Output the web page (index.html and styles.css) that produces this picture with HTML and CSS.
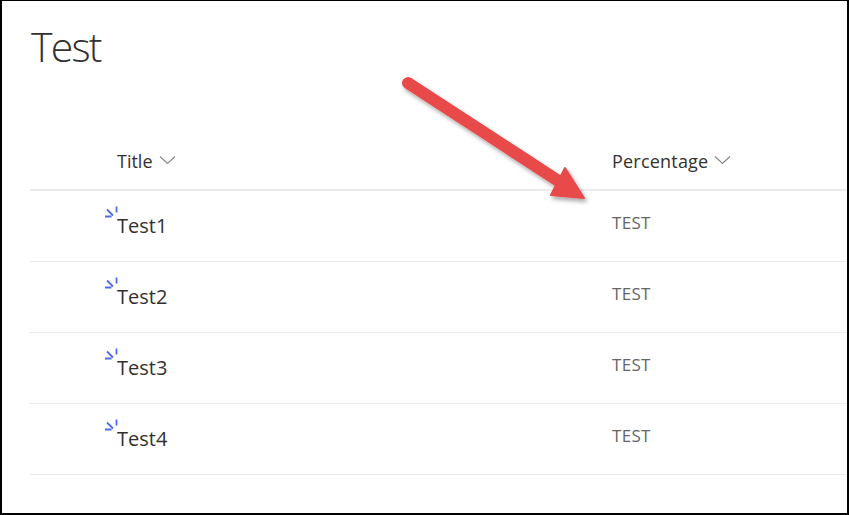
FILE: index.html
```html
<!DOCTYPE html>
<html lang="en">
<head>
    <meta charset="UTF-8">
    <title>Test</title>
    <link rel="stylesheet" href="styles.css">
</head>
<body>

    <div class="frame">
        <h1 class="page-title">Test</h1>

        <div class="list">
            <div class="row head">
                <div class="cell name">Title <span class="chev"><svg width="17" height="10" viewBox="0 0 17 10"><path d="M1 1.5 L8.5 8.5 L16 1.5" fill="none" stroke="#8a8886" stroke-width="1.2"/></svg></span></div>
                <div class="cell pct">Percentage <span class="chev"><svg width="17" height="10" viewBox="0 0 17 10"><path d="M1 1.5 L8.5 8.5 L16 1.5" fill="none" stroke="#8a8886" stroke-width="1.2"/></svg></span></div>
            </div>
            <div class="row">
                <div class="cell name"><span class="new"><svg width="14" height="12" viewBox="0 0 14 12"><path d="M1 10.5 H7.5 M3 3.5 L9 9.5 M12.5 0.5 V6.5" fill="none" stroke="#4f6bed" stroke-width="1.8"/></svg></span>Test1</div>
                <div class="cell pct">TEST</div>
            </div>
            <div class="row">
                <div class="cell name"><span class="new"><svg width="14" height="12" viewBox="0 0 14 12"><path d="M1 10.5 H7.5 M3 3.5 L9 9.5 M12.5 0.5 V6.5" fill="none" stroke="#4f6bed" stroke-width="1.8"/></svg></span>Test2</div>
                <div class="cell pct">TEST</div>
            </div>
            <div class="row">
                <div class="cell name"><span class="new"><svg width="14" height="12" viewBox="0 0 14 12"><path d="M1 10.5 H7.5 M3 3.5 L9 9.5 M12.5 0.5 V6.5" fill="none" stroke="#4f6bed" stroke-width="1.8"/></svg></span>Test3</div>
                <div class="cell pct">TEST</div>
            </div>
            <div class="row">
                <div class="cell name"><span class="new"><svg width="14" height="12" viewBox="0 0 14 12"><path d="M1 10.5 H7.5 M3 3.5 L9 9.5 M12.5 0.5 V6.5" fill="none" stroke="#4f6bed" stroke-width="1.8"/></svg></span>Test4</div>
                <div class="cell pct">TEST</div>
            </div>
        </div>

        <!-- annotation arrow drawn over the list -->
        <svg class="arrow" width="849" height="515" viewBox="0 0 849 515">
            <defs>
                <filter id="sh" x="-20%" y="-20%" width="140%" height="140%">
                    <feDropShadow dx="2" dy="3" stdDeviation="2" flood-color="#000" flood-opacity="0.35"/>
                </filter>
            </defs>
            <g filter="url(#sh)" fill="#e8484a" stroke="#e8484a">
                <line x1="408" y1="83" x2="560" y2="182" stroke-width="12" stroke-linecap="round"/>
                <polygon points="565,168 551,195 584,198" stroke-width="2" stroke-linejoin="round"/>
            </g>
        </svg>
    </div>

</body>
</html>
```

FILE: styles.css
```css
body {
    margin: 0;
    background-color: white;
    font-family: "Open Sans", "Liberation Sans", sans-serif;
    color: #323130;
}
.frame {
    position: relative;
    width: 849px;
    height: 515px;
    box-sizing: border-box;
    border: 2px solid #000;
    border-top-width: 1px;
    overflow: hidden;
}
.page-title {
    margin: 0;
    padding: 17px 0 0 29px;
    font-size: 41px;
    font-weight: 300;
    letter-spacing: -1.8px;
    line-height: 56px;
}
.list {
    margin: 59px 0 0 28px;
}
.row {
    display: grid;
    grid-template-columns: 582px 1fr;
    height: 70px;
    align-items: center;
    border-bottom: 1px solid #ebebeb;
}
.row.head {
    height: 56px;
    border-bottom: 2px solid #ebebeb;
}
.cell {
    font-size: 17px;
}
.name {
    padding-left: 87px;
    position: relative;
}
.head .cell {
    font-size: 18px;
    display: flex;
    align-items: center;
    gap: 6px;
}
.row:not(.head) .name {
    font-size: 20px;
    margin-top: -2px;
}
.pct {
    color: #666;
    font-size: 17px;
    letter-spacing: 0.3px;
}
.head .pct {
    color: #323130;
    letter-spacing: 0.2px;
}
.row:not(.head) .pct {
    margin-top: -8px;
}
.chev {
    display: inline-flex;
    margin-top: -2px;
}
.new {
    position: absolute;
    left: 74px;
    top: -6px;
    line-height: 0;
}
.arrow {
    position: absolute;
    left: -2px;
    top: -1px;
    pointer-events: none;
}
```
